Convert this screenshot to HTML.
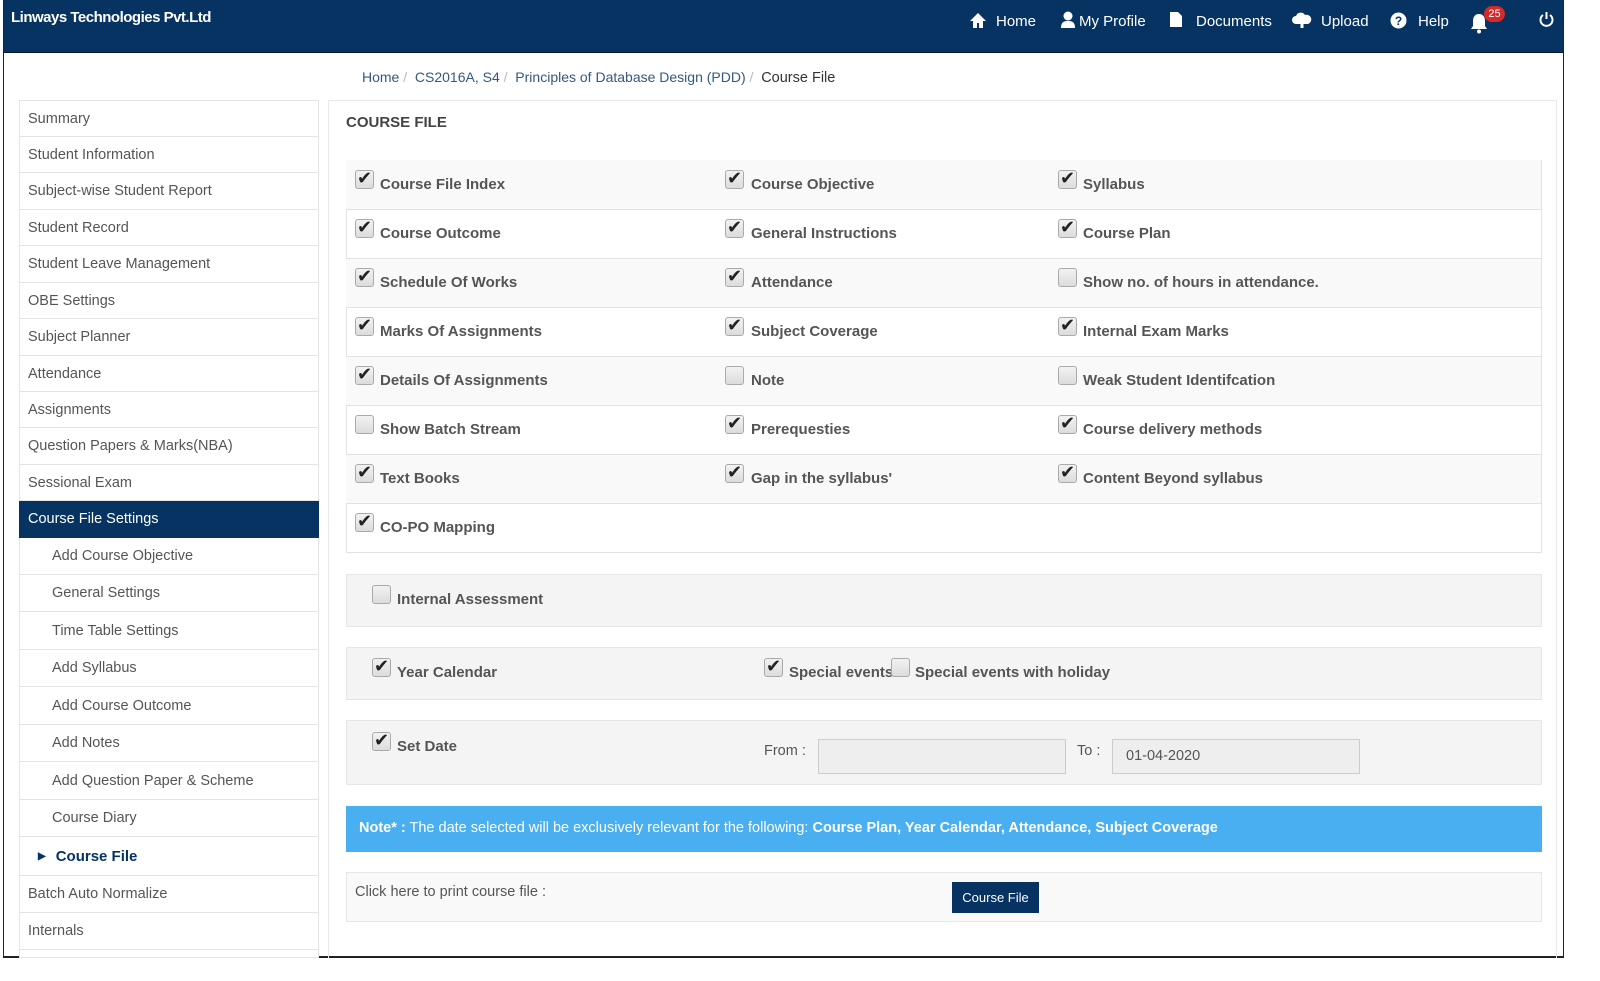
<!DOCTYPE html>
<html><head><meta charset="utf-8"><style>
*{box-sizing:border-box;margin:0;padding:0}
body{width:1600px;height:981px;background:#fff;font-family:"Liberation Sans",sans-serif;position:relative;overflow:hidden;color:#555}
.a{position:absolute}
.frame{left:3px;top:0;width:1561px;height:958px;border:1px solid #222;border-top:none;border-bottom:2px solid #222}
.hdr{left:3px;top:0;width:1561px;height:53px;background:#063362;border-bottom:1px solid #021a33}
.nav{color:#fff;font-size:15px;top:13px;white-space:nowrap}
.side{left:19px;width:300px;border:1px solid #e4e4e4;border-top:none;background:#fff;font-size:14.5px;color:#555;padding-left:8px;display:flex;align-items:center}
.sub{padding-left:32px}
.cb{width:19px;height:19px;border:1px solid #aaa;border-radius:3px;background:linear-gradient(#f2f2f2,#dcdcdc);display:inline-block;position:absolute;font-size:18px;font-weight:bold;line-height:16px;text-align:center;color:#222;font-family:"DejaVu Sans",sans-serif}
.lbl{font-size:15px;font-weight:bold;color:#555;white-space:nowrap}
.row{left:346px;width:1195px;height:49px;border-top:1px solid #e2e2e2}
.box{left:346px;width:1196px;background:#f4f4f4;border:1px solid #e6e6e6}
</style></head><body>
<div class="a hdr"></div>
<div class="a" style="left:11px;top:9px;color:#fff;font-weight:bold;font-size:15px;letter-spacing:-0.5px">Linways Technologies Pvt.Ltd</div>
<svg class="a" style="left:969px;top:12px" width="18" height="17" viewBox="0 0 18 17"><path d="M9 1L1 9h3v7h4v-5h2v5h4V9h3z" fill="#fff"/></svg>
<div class="a nav" style="left:996px">Home</div>
<svg class="a" style="left:1060px;top:11px" width="16" height="18" viewBox="0 0 16 18"><circle cx="8" cy="5" r="4.5" fill="#fff"/><path d="M1 17c0-6 3-7 7-7s7 1 7 7z" fill="#fff"/></svg>
<div class="a nav" style="left:1079px">My Profile</div>
<svg class="a" style="left:1169px;top:11px" width="14" height="17" viewBox="0 0 14 17"><path d="M1 1h8l4 4v11H1z" fill="#fff"/></svg>
<div class="a nav" style="left:1196px">Documents</div>
<svg class="a" style="left:1292px;top:12px" width="20" height="17" viewBox="0 0 20 17"><path d="M4 12a4 4 0 010-8 5 5 0 019-1 4 4 0 013 9h-3l-3-3-3 3z" fill="#fff"/><path d="M10 8l4 4h-2.5v4h-3v-4H6z" fill="#fff"/></svg>
<div class="a nav" style="left:1321px">Upload</div>
<svg class="a" style="left:1390px;top:12px" width="17" height="17" viewBox="0 0 17 17"><circle cx="8.5" cy="8.5" r="8" fill="#fff"/><text x="8.5" y="13" font-size="12" font-weight="bold" text-anchor="middle" fill="#063362" font-family="Liberation Sans">?</text></svg>
<div class="a nav" style="left:1418px">Help</div>
<svg class="a" style="left:1470px;top:13px" width="18" height="21" viewBox="0 0 18 21"><path d="M9 1c-4 0-6 3-6 7v5l-2 3h16l-2-3V8c0-4-2-7-6-7z" fill="#fff"/><circle cx="9" cy="18.5" r="2" fill="#fff"/></svg>
<div class="a" style="left:1484px;top:6px;width:21px;height:16px;background:#d42a2a;border-radius:8px;color:#fff;font-size:11px;text-align:center;line-height:16px">25</div>
<svg class="a" style="left:1538px;top:11px" width="17" height="17" viewBox="0 0 17 17"><path d="M5 4a6 6 0 107 0" stroke="#fff" stroke-width="2" fill="none"/><path d="M8.5 1v7" stroke="#fff" stroke-width="2"/></svg>
<div class="a frame"></div>

<div class="a" style="left:362px;top:69px;font-size:14px;color:#35587f;white-space:nowrap">Home <span style="color:#bbb">/</span>&nbsp; CS2016A, S4 <span style="color:#bbb">/</span>&nbsp; Principles of Database Design (PDD) <span style="color:#bbb">/</span>&nbsp; <span style="color:#333;font-size:14.5px">Course File</span></div>

<div class="a side" style="top:100px;height:37px;border-top:1px solid #e4e4e4">Summary</div>
<div class="a side" style="top:137px;height:36px">Student Information</div>
<div class="a side" style="top:173px;height:37px">Subject-wise Student Report</div>
<div class="a side" style="top:210px;height:36px">Student Record</div>
<div class="a side" style="top:246px;height:37px">Student Leave Management</div>
<div class="a side" style="top:283px;height:36px">OBE Settings</div>
<div class="a side" style="top:319px;height:37px">Subject Planner</div>
<div class="a side" style="top:356px;height:36px">Attendance</div>
<div class="a side" style="top:392px;height:36px">Assignments</div>
<div class="a side" style="top:428px;height:37px">Question Papers &amp; Marks(NBA)</div>
<div class="a side" style="top:465px;height:36px">Sessional Exam</div>
<div class="a side" style="top:501px;height:37px;background:#063362;color:#fff;border-color:#063362">Course File Settings</div>
<div class="a side sub" style="top:538px;height:37px">Add Course Objective</div>
<div class="a side sub" style="top:575px;height:37px">General Settings</div>
<div class="a side sub" style="top:612px;height:38px">Time Table Settings</div>
<div class="a side sub" style="top:650px;height:37px">Add Syllabus</div>
<div class="a side sub" style="top:687px;height:38px">Add Course Outcome</div>
<div class="a side sub" style="top:725px;height:37px">Add Notes</div>
<div class="a side sub" style="top:762px;height:38px">Add Question Paper &amp; Scheme</div>
<div class="a side sub" style="top:800px;height:37px">Course Diary</div>
<div class="a side" style="top:837px;height:39px;padding-left:18px;color:#063362;font-weight:bold;font-size:15px"><span style="font-size:10px;margin-right:10px">&#9654;</span>Course File</div>
<div class="a side" style="top:876px;height:37px">Batch Auto Normalize</div>
<div class="a side" style="top:913px;height:37px">Internals</div>
<div class="a side" style="top:950px;height:8px"></div>

<div class="a" style="left:328px;top:100px;width:1229px;height:858px;border:1px solid #e8e8e8;border-bottom:none"></div>
<div class="a" style="left:346px;top:114px;font-size:15px;font-weight:bold;color:#444">COURSE FILE</div>

<div class="a" style="left:346px;top:160px;width:1196px;height:393px;border:1px solid #e2e2e2"></div>
<div class="a row" style="top:160px;background:#f9f9f9;border-top:none"></div>
<div class="a row" style="top:209px"></div>
<div class="a row" style="top:258px;background:#f9f9f9"></div>
<div class="a row" style="top:307px"></div>
<div class="a row" style="top:356px;background:#f9f9f9"></div>
<div class="a row" style="top:405px"></div>
<div class="a row" style="top:454px;background:#f9f9f9"></div>
<div class="a row" style="top:503px"></div>

<div class="cb" style="left:355px;top:170px">✔</div><div class="a lbl" style="left:380px;top:176px">Course File Index</div>
<div class="cb" style="left:725px;top:170px">✔</div><div class="a lbl" style="left:751px;top:176px">Course Objective</div>
<div class="cb" style="left:1058px;top:170px">✔</div><div class="a lbl" style="left:1083px;top:176px">Syllabus</div>

<div class="cb" style="left:355px;top:219px">✔</div><div class="a lbl" style="left:380px;top:225px">Course Outcome</div>
<div class="cb" style="left:725px;top:219px">✔</div><div class="a lbl" style="left:751px;top:225px">General Instructions</div>
<div class="cb" style="left:1058px;top:219px">✔</div><div class="a lbl" style="left:1083px;top:225px">Course Plan</div>

<div class="cb" style="left:355px;top:268px">✔</div><div class="a lbl" style="left:380px;top:274px">Schedule Of Works</div>
<div class="cb" style="left:725px;top:268px">✔</div><div class="a lbl" style="left:751px;top:274px">Attendance</div>
<div class="cb" style="left:1058px;top:268px"></div><div class="a lbl" style="left:1083px;top:274px">Show no. of hours in attendance.</div>

<div class="cb" style="left:355px;top:317px">✔</div><div class="a lbl" style="left:380px;top:323px">Marks Of Assignments</div>
<div class="cb" style="left:725px;top:317px">✔</div><div class="a lbl" style="left:751px;top:323px">Subject Coverage</div>
<div class="cb" style="left:1058px;top:317px">✔</div><div class="a lbl" style="left:1083px;top:323px">Internal Exam Marks</div>

<div class="cb" style="left:355px;top:366px">✔</div><div class="a lbl" style="left:380px;top:372px">Details Of Assignments</div>
<div class="cb" style="left:725px;top:366px"></div><div class="a lbl" style="left:751px;top:372px">Note</div>
<div class="cb" style="left:1058px;top:366px"></div><div class="a lbl" style="left:1083px;top:372px">Weak Student Identifcation</div>

<div class="cb" style="left:355px;top:415px"></div><div class="a lbl" style="left:380px;top:421px">Show Batch Stream</div>
<div class="cb" style="left:725px;top:415px">✔</div><div class="a lbl" style="left:751px;top:421px">Prerequesties</div>
<div class="cb" style="left:1058px;top:415px">✔</div><div class="a lbl" style="left:1083px;top:421px">Course delivery methods</div>

<div class="cb" style="left:355px;top:464px">✔</div><div class="a lbl" style="left:380px;top:470px">Text Books</div>
<div class="cb" style="left:725px;top:464px">✔</div><div class="a lbl" style="left:751px;top:470px">Gap in the syllabus'</div>
<div class="cb" style="left:1058px;top:464px">✔</div><div class="a lbl" style="left:1083px;top:470px">Content Beyond syllabus</div>

<div class="cb" style="left:355px;top:513px">✔</div><div class="a lbl" style="left:380px;top:519px">CO-PO Mapping</div>

<div class="a box" style="top:574px;height:53px"></div>
<div class="cb" style="left:372px;top:585px"></div><div class="a lbl" style="left:397px;top:591px">Internal Assessment</div>

<div class="a box" style="top:647px;height:53px"></div>
<div class="cb" style="left:372px;top:658px">✔</div><div class="a lbl" style="left:397px;top:664px">Year Calendar</div>
<div class="cb" style="left:764px;top:658px">✔</div><div class="a lbl" style="left:789px;top:664px">Special events</div>
<div class="cb" style="left:891px;top:658px"></div><div class="a lbl" style="left:915px;top:664px">Special events with holiday</div>

<div class="a box" style="top:720px;height:65px"></div>
<div class="cb" style="left:372px;top:732px">✔</div><div class="a lbl" style="left:397px;top:738px">Set Date</div>
<div class="a" style="left:764px;top:743px;font-size:14.5px;color:#555">From :</div>
<div class="a" style="left:818px;top:739px;width:248px;height:35px;background:#eee;border:1px solid #ccc"></div>
<div class="a" style="left:1077px;top:743px;font-size:14.5px;color:#555">To :</div>
<div class="a" style="left:1112px;top:739px;width:248px;height:35px;background:#eee;border:1px solid #ccc;font-size:14.5px;color:#555;padding:8px 13px">01-04-2020</div>

<div class="a" style="left:346px;top:806px;width:1196px;height:46px;background:#4aaff0;color:#fff;font-size:14.5px;padding:14px 13px;white-space:nowrap"><b>Note* :</b> The date selected will be exclusively relevant for the following: <b>Course Plan, Year Calendar, Attendance, Subject Coverage</b></div>

<div class="a box" style="top:872px;height:50px;background:#f9f9f9"></div>
<div class="a" style="left:355px;top:884px;font-size:14.5px;color:#555">Click here to print course file :</div>
<div class="a" style="left:952px;top:882px;width:87px;height:31px;background:#063362;color:#fff;font-size:13px;text-align:center;line-height:31px">Course File</div>
</body></html>
